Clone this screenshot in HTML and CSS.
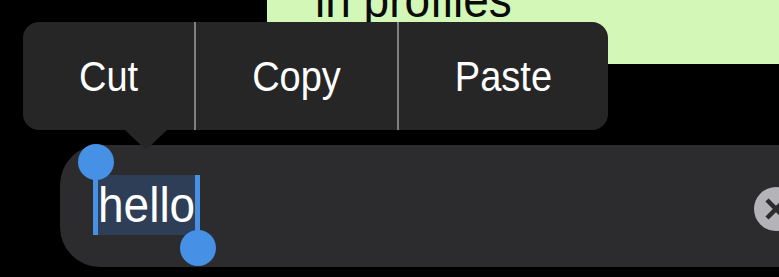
FILE: index.html
```html
<!DOCTYPE html>
<html lang="en">
<head>
<meta charset="utf-8">
<title>Text selection menu</title>
<link rel="stylesheet" href="styles.css">
</head>
<body>
<div class="screen">
  <div class="bubble"><p class="bubble-text">in profiles</p></div>
  <div class="field">
    <span class="selection"><span class="handle handle-start"></span><span class="selected-text">hello</span><span class="handle handle-end"></span></span>
    <span class="clear">
      <svg width="44" height="44" viewBox="0 0 44 44" aria-hidden="true">
        <circle cx="22" cy="22" r="22" fill="#b3b3b8"/>
        <path d="M13 13 L31 31 M31 13 L13 31" stroke="#2c2c2e" stroke-width="4.5" stroke-linecap="butt"/>
      </svg>
    </span>
  </div>
  <div class="menu">
    <span class="menu-item"><span class="menu-label">Cut</span></span>
    <span class="divider"></span>
    <span class="menu-item"><span class="menu-label">Copy</span></span>
    <span class="divider"></span>
    <span class="menu-item"><span class="menu-label">Paste</span></span>
  </div>
</div>
</body>
</html>
```
FILE: styles.css
```css
html, body {
  margin: 0;
  padding: 0;
  background: #000;
}
.screen {
  position: relative;
  width: 779px;
  height: 277px;
  overflow: hidden;
  background: #000;
  font-family: "Liberation Sans", Arial, sans-serif;
}
.bubble {
  margin-left: 267px;
  height: 64px;
  background: #d3f7b7;
  overflow: hidden;
}
.bubble-text {
  margin: -21px 0 0 48px;
  font-size: 46px;
  line-height: 46px;
  color: #0a0a0a;
  white-space: nowrap;
  transform: scaleY(1.08);
  transform-origin: left bottom;
}
.field {
  margin-top: 81px;
  margin-left: 60px;
  width: 738px;
  height: 122px;
  box-sizing: border-box;
  padding-left: 33px;
  background: #2c2c2e;
  border-radius: 40px 0 0 40px;
  display: flex;
  align-items: center;
  justify-content: space-between;
}
.selection {
  position: relative;
  display: inline-flex;
  align-items: center;
  height: 60px;
  margin-top: -2px;
  background: #2d3e56;
  border-left: 5px solid #4690e6;
  border-right: 5px solid #4690e6;
  color: #fff;
  font-size: 46px;
  line-height: 60px;
}
.selected-text {
  display: inline-block;
  transform: scaleY(1.08);
}
.handle {
  position: absolute;
  width: 36px;
  height: 36px;
  border-radius: 50%;
  background: #4690e6;
}
.handle-start {
  left: -20.5px;
  top: -31px;
}
.handle-end {
  right: -20.5px;
  bottom: -31px;
}
.clear {
  display: flex;
  margin-top: 6px;
}
.menu {
  position: absolute;
  left: 23px;
  top: 22px;
  height: 108px;
  display: flex;
  align-items: stretch;
  background: #262626;
  border-radius: 16px;
}
.menu::after {
  content: "";
  position: absolute;
  left: 102px;
  top: 108px;
  width: 0;
  height: 0;
  border-left: 21px solid transparent;
  border-right: 21px solid transparent;
  border-top: 20px solid #262626;
}
.menu-item {
  display: flex;
  align-items: center;
  padding: 0 56px;
  color: #fff;
  font-size: 38px;
  margin-top: 2px;
}
.menu-label {
  display: inline-block;
  transform: scaleY(1.1);
}
.divider {
  width: 2px;
  background: #808080;
}
```
